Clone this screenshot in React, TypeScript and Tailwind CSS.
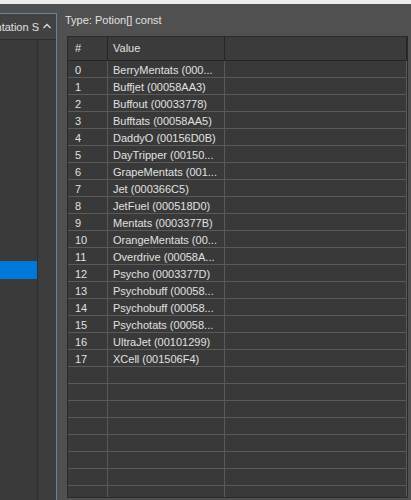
import React from "react";

const items = [
  "BerryMentats (000...",
  "Buffjet (00058AA3)",
  "Buffout (00033778)",
  "Bufftats (00058AA5)",
  "DaddyO (00156D0B)",
  "DayTripper (00150...",
  "GrapeMentats (001...",
  "Jet (000366C5)",
  "JetFuel (000518D0)",
  "Mentats (0003377B)",
  "OrangeMentats (00...",
  "Overdrive (00058A...",
  "Psycho (0003377D)",
  "Psychobuff (00058...",
  "Psychobuff (00058...",
  "Psychotats (00058...",
  "UltraJet (00101299)",
  "XCell (001506F4)",
];

export default function App() {
  const rows = Array.from({ length: 27 }, (_, i) => i);
  return (
    <div
      className="w-[411px] h-[500px] bg-[#505050] flex flex-col overflow-hidden text-[11px] text-[#e0e0e0]"
      style={{ fontFamily: '"Liberation Sans", Arial, sans-serif' }}
    >
      <div className="h-[4px] bg-[#ececec] shrink-0" />
      <div className="flex flex-1 min-h-0">
        {/* left panel */}
        <div className="w-[57px] shrink-0 pt-[9px] flex flex-col">
          <div className="flex-1 flex flex-col border-t border-r border-[#5f88a6] bg-[#3a3a3a]">
            <div className="h-[26px] shrink-0 flex items-center bg-[#424242] border-b border-[#2e2e2e]">
              <div className="w-[39px] overflow-hidden flex justify-end whitespace-nowrap leading-[14px]">
                <span className="shrink-0">Presentation S</span>
              </div>
              <svg width="8" height="6" viewBox="0 0 8 6" className="ml-[4px] mb-[2px]">
                <polyline points="0.5,5 4,1.5 7.5,5" fill="none" stroke="#dcdcdc" strokeWidth="1.3" />
              </svg>
            </div>
            <div className="flex-1 flex">
              <div className="w-[38px] border-r border-[#2f2f2f] flex flex-col pt-[221px]">
                <div className="h-[18px] bg-[#0078d7]" />
              </div>
              <div className="flex-1 bg-[#3c3c3c]" />
            </div>
          </div>
        </div>
        {/* right area */}
        <div className="flex-1 flex flex-col pl-[8px] pt-[9px] pb-[2px] min-h-0">
          <div className="h-[14px] leading-[14px] whitespace-nowrap">Type: Potion[] const</div>
          <div className="mt-[9px] ml-[2px] w-[341px] flex-1 min-h-0 border border-[#2a2a2a] bg-[#393939] flex flex-col overflow-hidden">
            <div className="h-[24px] shrink-0 flex bg-[#3b3b3b] border-b border-[#262626]">
              <div className="w-[40px] border-r border-[#262626] flex items-center pl-[7px]">#</div>
              <div className="w-[117px] border-r border-[#262626] flex items-center pl-[5px]">Value</div>
              <div className="flex-1 border-r border-[#262626]" />
            </div>
            <div className="flex-1 flex flex-col overflow-hidden">
              {rows.map((i) => (
                <div key={i} className="h-[17px] shrink-0 flex border-b border-[#5a5a5a]">
                  <div className="w-[40px] border-r border-[#5a5a5a] flex items-center pl-[7px] pt-[2px] leading-[14px]">
                    {i < items.length ? i : ""}
                  </div>
                  <div className="w-[117px] border-r border-[#5a5a5a] flex items-center pl-[5px] pt-[2px] whitespace-nowrap overflow-hidden leading-[14px]">
                    {i < items.length ? items[i] : ""}
                  </div>
                  <div className="flex-1 border-r border-[#5a5a5a]" />
                </div>
              ))}
            </div>
          </div>
        </div>
      </div>
    </div>
  );
}
